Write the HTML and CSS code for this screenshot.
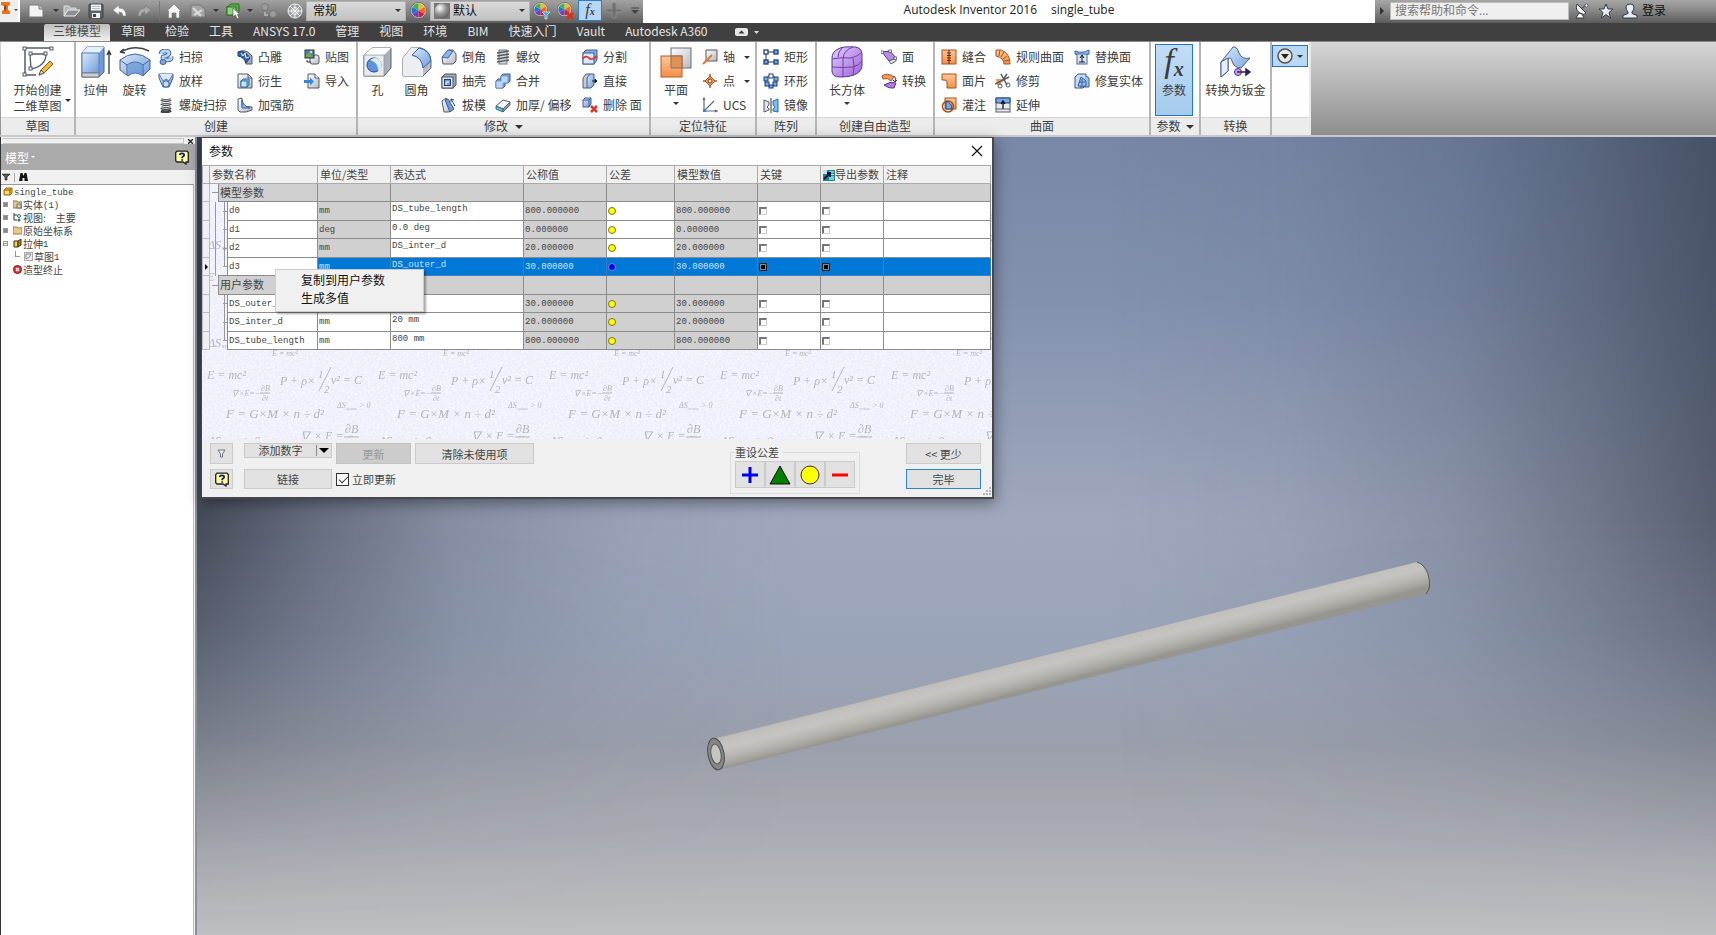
FILE: index.html
```html
<!DOCTYPE html>
<html lang="zh-CN">
<head>
<meta charset="utf-8">
<title>Autodesk Inventor 2016 single_tube</title>
<link rel="stylesheet" href="styles.css">
</head>
<body>
<svg class="defs" aria-hidden="true">
  <defs>
    <linearGradient id="b" x1="0" y1="0" x2="1" y2="1"><stop offset="0" stop-color="#dbeafb"/><stop offset="1" stop-color="#6d9bd8"/></linearGradient>
    <linearGradient id="o" x1="0" y1="0" x2="0" y2="1"><stop offset="0" stop-color="#ffc795"/><stop offset="1" stop-color="#f2904c"/></linearGradient>
    <linearGradient id="g" x1="0" y1="0" x2="1" y2="1"><stop offset="0" stop-color="#ffffff"/><stop offset="1" stop-color="#b4bac2"/></linearGradient>
    <linearGradient id="p" x1="0" y1="0" x2="1" y2="1"><stop offset="0" stop-color="#e6ccff"/><stop offset="1" stop-color="#9a63d8"/></linearGradient>
    <radialGradient id="ball" cx=".35" cy=".3" r=".8"><stop offset="0" stop-color="#fff"/><stop offset=".5" stop-color="#999"/><stop offset="1" stop-color="#555"/></radialGradient>
    <symbol id="wheel" viewBox="0 0 16 16"><circle cx="8" cy="8" r="7.500" fill="#e8e8e8" stroke="#555" stroke-width=".8"/><path d="M8 8V1.500A6.500 6.500 0 0 1 13.600 4.750Z" fill="#f7b52c"/><path d="M8 8L13.600 4.750A6.500 6.500 0 0 1 13.600 11.250Z" fill="#f06a22"/><path d="M8 8L13.600 11.250A6.500 6.500 0 0 1 8 14.500Z" fill="#d32034"/><path d="M8 8V14.500A6.500 6.500 0 0 1 2.400 11.250Z" fill="#7a3bb5"/><path d="M8 8L2.400 11.250A6.500 6.500 0 0 1 2.400 4.750Z" fill="#2770d6"/><path d="M8 8L2.400 4.750A6.500 6.500 0 0 1 8 1.500Z" fill="#42b54a"/></symbol>
    <symbol id="help" viewBox="0 0 14 14"><path d="M2 .7H12L13.300 2V11.500H11V13.500L8 11.500H2L.7 10.200V2Z" fill="#ffff9c" stroke="#222" stroke-width="1.300"/><path d="M4.800 4.600Q4.800 2.800 7 2.800T9.200 4.600Q9.200 5.700 7.200 6.700V7.700M7.200 8.700V10.200" fill="none" stroke="#1a1a8c" stroke-width="1.800"/></symbol>
  </defs>
</svg>

<header class="titlebar">
  <div class="qat">
    <button class="logo" aria-label="应用程序菜单"><svg width="18" height="14" viewBox="0 0 18 14"><path d="M1 0H10V3L8 4V8L10 9V12H2V9L4 8V4L1 3Z" fill="#e8741e"/><path d="M4 4L6 3V9L4 8Z" fill="#9c430a"/><path d="M14 7H18L16 9Z" fill="#444"/></svg></button>
    <button class="q q-wide" aria-label="新建"><svg width="18" height="16" viewBox="0 0 18 16"><path d="M2 2H12L16 6V14H2Z" fill="#f4f4f4" stroke="#777"/><path d="M12 2V6H16" fill="#ccc" stroke="#777"/></svg></button>
    <i class="tri q-tri"></i>
    <button class="q" aria-label="打开"><svg width="18" height="16" viewBox="0 0 18 16"><path d="M1 13V3H6L7 5H13V7" fill="#b5b8bc" stroke="#ddd"/><path d="M1 13L5 7H17L12 13Z" fill="#8c9095" stroke="#eee"/></svg></button>
    <button class="q" aria-label="保存"><svg width="16" height="16" viewBox="0 0 16 16"><rect x="1" y="1" width="14" height="14" rx="1" fill="#5c6269" stroke="#3d4146"/><rect x="3" y="1.500" width="10" height="6" fill="#f0f0f0"/><path d="M4 3.500H12M4 5.500H12" stroke="#bbb"/><rect x="4" y="10" width="8" height="5" fill="#eee"/><rect x="5" y="11" width="3" height="3" fill="#444"/></svg></button>
    <button class="q" aria-label="撤消"><svg width="16" height="16" viewBox="0 0 16 16"><path d="M1 7L7 2V5Q14 5 14 13L11 13Q11 9 7 9V12Z" fill="#f5f5f5" stroke="#888" stroke-width=".6"/></svg></button>
    <button class="q" aria-label="恢复"><svg width="16" height="16" viewBox="0 0 16 16"><path d="M15 7L9 2V5Q2 5 2 13L5 13Q5 9 9 9V12Z" fill="#a9a9a9" stroke="#777" stroke-width=".6"/></svg></button>
    <i class="q-sep"></i>
    <button class="q" aria-label="主视图"><svg width="16" height="16" viewBox="0 0 16 16"><path d="M8 1L15 8H13.500V15H10V10H6V15H2.500V8H1Z" fill="#f5f5f5" stroke="#777" stroke-width=".7"/></svg></button>
    <button class="q" aria-label="更新"><svg width="16" height="16" viewBox="0 0 16 16"><path d="M1 2H10L15 6V14H1Z" fill="#a5a5a5" stroke="#777"/><path d="M3 5L11 13M4 12L12 7" stroke="#ddd" stroke-width="2"/></svg></button>
    <i class="tri q-tri2"></i>
    <button class="q" aria-label="选择"><svg width="18" height="18" viewBox="0 0 18 18"><path d="M2 5L6 2H14V10L11 13H2Z" fill="#5cab48" stroke="#2d6f22"/><rect x="2" y="5" width="9" height="8" fill="#8fd477" stroke="#2d6f22"/><path d="M8 6L8 15L10.500 13L12 17L14 16L12.500 12.500H15Z" fill="#fff" stroke="#555" stroke-width=".7"/></svg></button>
    <i class="tri q-tri"></i>
    <button class="q q-mid" aria-label="关联"><svg width="16" height="16" viewBox="0 0 16 16"><circle cx="4" cy="4" r="3.500" fill="#9c9c9c" stroke="#777"/><circle cx="12" cy="11" r="3.500" fill="#9c9c9c" stroke="#777"/><path d="M4 9V12H7" stroke="#aaa" fill="none" stroke-width="2"/></svg></button>
    <button class="q q-nar" aria-label="材料"><svg width="16" height="16" viewBox="0 0 16 16"><circle cx="8" cy="8" r="7" fill="#9b9fa2" stroke="#eee"/><path d="M8 1V15M1 8H15M3 3L13 13M13 3L3 13" stroke="#f3f3f3"/><circle cx="8" cy="8" r="3.500" fill="none" stroke="#f3f3f3"/></svg></button>
    <div class="combo"><select aria-label="材料样式"><option>常规</option></select><i class="tri"></i></div>
    <button class="q" aria-label="外观"><svg width="17" height="17"><use href="#wheel"/></svg></button>
    <div class="combo"><svg width="16" height="16" viewBox="0 0 16 16"><rect width="16" height="16" fill="#777"/><circle cx="8" cy="8" r="7.500" fill="url(#ball)"/></svg><select aria-label="外观样式"><option>默认</option></select><i class="tri"></i></div>
    <button class="q" aria-label="调整"><svg width="18" height="18" viewBox="0 0 18 18"><use href="#wheel" width="15" height="15"/><path d="M9 10H17L14 13V17H12V13Z" fill="#35a5e0" stroke="#fff" stroke-width=".6"/></svg></button>
    <button class="q" aria-label="清除"><svg width="18" height="18" viewBox="0 0 18 18"><use href="#wheel" width="15" height="15"/><path d="M10 11L16 17M16 11L10 17" stroke="#d6301f" stroke-width="2.500"/></svg></button>
    <button class="q q-fx" aria-label="参数"><i>f</i><sub>x</sub></button>
    <button class="q" aria-label="添加"><svg width="18" height="18" viewBox="0 0 18 18"><path d="M7 1H11V7H17V10H11V16H7V10H1V7H7Z" fill="#6f6f6f" stroke="#8d8d8d"/></svg></button>
    <button class="q q-end" aria-label="自定义"><svg width="10" height="8" viewBox="0 0 10 8"><path d="M1 1H9" stroke="#444"/><path d="M1 3H9L5 7Z" fill="#444"/></svg></button>
  </div>
  <h1 class="apptitle"><span>Autodesk Inventor 2016</span><span>single_tube</span></h1>
  <div class="infocenter">
    <svg width="6" height="8" viewBox="0 0 6 8"><path d="M1 0L5 4L1 8Z" fill="#333"/></svg>
    <input type="text" aria-label="搜索" placeholder="搜索帮助和命令...">
    <button aria-label="通信中心"><svg width="16" height="16" viewBox="0 0 16 16"><path d="M3 1Q0 9 10 11.500L12 10Z" fill="#f3f5f8" stroke="#343b48"/><path d="M7 6L12 2M2 15L5 10L8 11L10 15Z" fill="#fff" stroke="#343b48"/><circle cx="12.500" cy="2.500" r="1.500" fill="#fff" stroke="#343b48" stroke-width=".7"/></svg></button>
    <button aria-label="收藏夹"><svg width="16" height="16" viewBox="0 0 16 16"><path d="M8 1L10 6H15L11 9.500L12.500 15L8 11.500L3.500 15L5 9.500L1 6H6Z" fill="#e9edf3" stroke="#343b48"/></svg></button>
    <button class="login"><svg width="16" height="16" viewBox="0 0 16 16"><path d="M1 15V12.500L6 10.500V9Q4 7 4 4Q4 1 8 1T12 4Q12 7 10 9V10.500L15 12.500V15Z" fill="#e9edf3" stroke="#343b48"/></svg>登录</button>
  </div>
</header>

<nav class="tabs">
  <button class="tab tab-on">三维模型</button><button class="tab">草图</button><button class="tab">检验</button><button class="tab">工具</button><button class="tab">ANSYS 17.0</button><button class="tab">管理</button><button class="tab">视图</button><button class="tab">环境</button><button class="tab">BIM</button><button class="tab">快速入门</button><button class="tab">Vault</button><button class="tab">Autodesk A360</button>
  <button class="tab-min" aria-label="最小化功能区"><svg width="24" height="8" viewBox="0 0 24 8"><rect width="13" height="8" rx="2" fill="#e6e6e6"/><path d="M3.500 5.500H9.500L6.500 2.500Z" fill="#333"/><path d="M19 3H24L21.500 6Z" fill="#ddd"/></svg></button>
</nav>

<section class="ribbon">
  <div class="panel p-sketch">
    <div class="tools">
      <button class="big"><svg width="32" height="32" viewBox="0 0 32 32"><path d="M3 2V29M1 2H30M3 29H14" stroke="#555b66" stroke-width="1.500" fill="none"/><path d="M8 8H24Q24 20 9 23Z" fill="none" stroke="#555b66" stroke-width="1.300"/><g fill="#fff" stroke="#555b66"><rect x="1" y="1" width="3" height="3"/><rect x="28" y="1" width="3" height="3"/><rect x="1" y="27" width="3" height="3"/><rect x="7" y="6" width="3" height="3"/><rect x="22" y="6" width="3" height="3"/><rect x="7" y="21" width="3" height="3"/></g><path d="M17 29L19 24L28 15L31 18L22 27Z" fill="#f7b73d" stroke="#8a5a14"/><path d="M17 29L19 24L22 27Z" fill="#f5dfb8" stroke="#555"/></svg><span class="two-line"><span>开始创建<br>二维草图</span><i class="tri"></i></span></button>
    </div>
    <h2>草图</h2>
  </div>

  <div class="panel p-create">
    <div class="tools">
      <button class="big"><svg width="32" height="32" viewBox="0 0 32 32"><path d="M2 7L7 1H24V26L19 31H2Z" fill="#6f9ddb" stroke="#4a618c"/><path d="M2 7L7 1H24L19 7Z" fill="#e5f0fd"/><rect x="2" y="7" width="17" height="20" fill="url(#b)" stroke="#5b7fb8"/><path d="M2 27H19V31H2Z" fill="#cdd0d4" stroke="#777"/><path d="M29 28V6M27 9L29 5L31 9" stroke="#333" fill="none" stroke-width="1.300"/></svg><span>拉伸</span></button>
      <button class="big"><svg width="32" height="32" viewBox="0 0 32 32"><path d="M2 6Q16 -2 30 5M1 6L5 3M1 6L6 7" stroke="#3d4149" fill="none" stroke-width="1.500"/><path d="M1 14Q16 2 31 14V23L24 30Q16 24 9 30L1 24Z" fill="url(#b)" stroke="#4a618c"/><path d="M1 14L8 19Q16 13 24 19L31 14M8 19V29M24 19V30" fill="none" stroke="#4a618c"/><path d="M8 19Q16 13 24 19V30Q16 24 9 30Z" fill="#6393d5" opacity=".6"/></svg><span>旋转</span></button>
      <div class="col c-1">
        <button class="sm"><svg viewBox="0 0 16 16"><path d="M3 5Q3 2 7 2T11 4T8 7L5 8Q4 11 9 11Q14 11 13 8" fill="none" stroke="#3c5f9c" stroke-width="4.500"/><path d="M3 5Q3 2 7 2T11 4T8 7L5 8Q4 11 9 11Q14 11 13 8" fill="none" stroke="#b8d4f5" stroke-width="2.800"/><ellipse cx="5" cy="13" rx="3" ry="2.500" fill="#7da9e2" stroke="#3c5f9c"/></svg>扫掠</button>
        <button class="sm"><svg viewBox="0 0 16 16"><path d="M1 1H15V5L11 14H5L1 5Z" fill="url(#b)" stroke="#3c5f9c"/><path d="M1 1L5 8L8 6L11 8L15 1" fill="#dce9fa" stroke="#3c5f9c" stroke-width=".8"/><circle cx="8" cy="11" r="3.200" fill="#c2dbf7" stroke="#3c5f9c"/></svg>放样</button>
        <button class="sm"><svg viewBox="0 0 16 16"><g fill="none" stroke="#3f444c" stroke-width="3"><path d="M3 2.500Q8 5 13 2.500M3 6.500Q8 9 13 6.500M3 10.500Q8 13 13 10.500M3 14Q8 16 13 13.500"/></g><g fill="none" stroke="#c6cad0" stroke-width="1"><path d="M3 2.500Q8 5 13 2.500M3 6.500Q8 9 13 6.500M3 10.500Q8 13 13 10.500"/></g></svg>螺旋扫掠</button>
      </div>
      <div class="col c-2">
        <button class="sm"><svg viewBox="0 0 16 16"><path d="M1 3Q9 -1 15 7V15L9 15L8 10Z" fill="#aab0b8" stroke="#555"/><path d="M1 3Q8 1 13 9L9 14Q7 8 1 7Z" fill="#2f64b0" stroke="#1c3c77"/><path d="M4 4L6 7L8 4L9 9L12 8" fill="none" stroke="#fff"/></svg>凸雕</button>
        <button class="sm"><svg viewBox="0 0 16 16"><path d="M1 1H11L15 5V15H1Z" fill="url(#g)" stroke="#555b66"/><path d="M11 1V5H15" fill="none" stroke="#555b66"/><path d="M4 8L6 6H12V12L10 14H4Z" fill="#7fb9e6" stroke="#316e9f"/><rect x="4" y="8" width="6" height="6" fill="#cce6fa" stroke="#316e9f"/></svg>衍生</button>
        <button class="sm"><svg viewBox="0 0 16 16"><path d="M1 2L5 1V9L15 10V13L9 15H3L1 13Z" fill="url(#g)" stroke="#555b66"/><path d="M5 3Q6 9 13 11L5 11Z" fill="#8cb9ee" stroke="#2d5fa8"/></svg>加强筋</button>
      </div>
      <div class="col c-3">
        <button class="sm"><svg viewBox="0 0 16 16"><rect x="6" y="6" width="9" height="9" rx="2" fill="url(#g)" stroke="#555b66"/><rect x="1" y="1" width="9" height="8" fill="#4c82b8" stroke="#333"/><path d="M2 6L5 4L9 8H2Z" fill="#72ad3e"/><circle cx="7" cy="3" r="1.200" fill="#fdeb55"/><path d="M3 11V13H7" fill="none" stroke="#333"/></svg>贴图</button>
        <button class="sm"><svg viewBox="0 0 16 16"><path d="M4 1H11L15 5V15H4Z" fill="url(#g)" stroke="#555b66"/><path d="M11 1V5H15" fill="#fff" stroke="#555b66"/><path d="M0 7H6V4.500L10 8.500L6 12.500V10H0Z" fill="#3389d6"/></svg>导入</button>
      </div>
    </div>
    <h2>创建</h2>
  </div>

  <div class="panel p-modify">
    <div class="tools">
      <button class="big"><svg width="32" height="32" viewBox="0 0 32 32"><path d="M2 9L10 2H29V22L22 30H2Z" fill="#a9afb8" stroke="#5b616c"/><path d="M2 9L10 2H29L22 9Z" fill="#fff"/><path d="M2 9H22V30H2Z" fill="#e9ebef" stroke="#8a9099" stroke-width=".7"/><circle cx="12" cy="19" r="7" fill="#5f92dd" stroke="#27487f"/><path d="M12 12A7 7 0 0 1 16 25Q17 17 8 14Z" fill="#dcebfd"/></svg><span>孔</span></button>
      <button class="big"><svg width="32" height="32" viewBox="0 0 32 32"><path d="M2 12L10 2H20Q30 5 30 16V22L22 30H2Z" fill="#b9bec6" stroke="#5b616c"/><path d="M2 12L10 2H18L11 10Q22 13 22 22V30H2Z" fill="#eceef1"/><path d="M11 9L18 2Q29 4 30 15L22 22Q21 11 11 9Z" fill="url(#b)" stroke="#3664a8"/></svg><span>圆角</span></button>
      <div class="col c-4">
        <button class="sm"><svg viewBox="0 0 16 16"><path d="M1 8L8 1H12L15 5V12L12 15H2Z" fill="url(#g)" stroke="#555b66"/><path d="M1 8L7 1L12 2L7 9Z" fill="#8db7ee" stroke="#3664a8"/></svg>倒角</button>
        <button class="sm"><svg viewBox="0 0 16 16"><path d="M1 4L4 1H15V12L12 15H1Z" fill="#a3a9b2" stroke="#4d535d"/><rect x="1" y="4" width="11" height="11" fill="#dde7f4" stroke="#4d535d"/><rect x="3.500" y="6.500" width="6" height="6" fill="#6f9ddd" stroke="#203f78"/><path d="M5 12V9H8" stroke="#fff" fill="none"/></svg>抽壳</button>
        <button class="sm"><svg viewBox="0 0 16 16"><path d="M1 4L5 1L12 12L8 15H3Z" fill="url(#g)" stroke="#555b66"/><path d="M4 3L7 2L13 12L9 15Z" fill="#6f9ddd" stroke="#305a9b"/><path d="M10 2L14 9M10 2V5M10 2L13 3" stroke="#444" fill="none"/></svg>拔模</button>
      </div>
      <div class="col c-5">
        <button class="sm"><svg viewBox="0 0 16 16"><rect x="4" y="1" width="8" height="14" fill="#d6d9dd" stroke="#777"/><path d="M2 4L14 2M2 7L14 5M2 10L14 8M2 13L14 11" stroke="#555b66" stroke-width="1.300"/></svg>螺纹</button>
        <button class="sm"><svg viewBox="0 0 16 16"><path d="M6 3L8 1H15V8L13 10H10V13L8 15H1V8L3 6H6Z" fill="#7fa8de" stroke="#365b96"/><path d="M6 3H13V10H8V15H1V8H6Z" fill="#bcd5f4" stroke="#5b84bf" stroke-width=".7"/></svg>合并</button>
        <button class="sm"><svg viewBox="0 0 16 16"><path d="M1 9L8 3L15 5L8 12Z" fill="#f4f6f8" stroke="#555b66"/><path d="M1 9V12L8 15V12Z" fill="#74b6dd" stroke="#316e9f"/><path d="M8 12L15 5V8L8 15Z" fill="#9aa0a9" stroke="#555b66"/></svg>加厚/ 偏移</button>
      </div>
      <div class="col c-6">
        <button class="sm"><svg viewBox="0 0 16 16"><path d="M1 4L4 1H15V11L12 15H1Z" fill="#86aee0" stroke="#3c5f9c"/><rect x="1" y="4" width="11" height="11" fill="#d9e7f8" stroke="#3c5f9c"/><path d="M0 10Q4 6 7 9T15 7" fill="none" stroke="#d63b3b" stroke-width="1.800"/></svg>分割</button>
        <button class="sm"><svg viewBox="0 0 16 16"><path d="M1 5L4 1H8V11L5 15H1Z" fill="#c9ccd2" stroke="#555b66"/><path d="M5 5L8 1H12V12L9 15H5Z" fill="url(#b)" stroke="#3c5f9c"/><path d="M10 8H13M13 6L15 8L13 10Z" stroke="#222" fill="#222"/></svg>直接</button>
        <button class="sm"><svg viewBox="0 0 16 16"><path d="M1 3L3 1H9V7L7 10H1Z" fill="url(#b)" stroke="#3c5f9c"/><path d="M1 3H7V10M7 3L9 1" fill="none" stroke="#3c5f9c"/><path d="M9 9L15 15M15 9L9 15" stroke="#d8382c" stroke-width="2.600"/></svg>删除 面</button>
      </div>
    </div>
    <h2>修改<i class="tri"></i></h2>
  </div>

  <div class="panel p-locate">
    <div class="tools">
      <button class="big"><svg width="32" height="32" viewBox="0 0 32 32"><rect x="11" y="2" width="20" height="20" fill="url(#g)" stroke="#666d78"/><rect x="1" y="10" width="21" height="21" fill="url(#o)" stroke="#b85a1c"/><path d="M11 10H22V22H11Z" fill="#e09058" stroke="#8d6c58"/></svg><span>平面</span><i class="tri"></i></button>
      <div class="col c-7">
        <button class="sm"><svg viewBox="0 0 16 16"><path d="M4 1H15V12H4Z" fill="url(#g)" stroke="#555b66"/><path d="M1 15L10 6" stroke="#e1762c" stroke-width="2"/></svg>轴<i class="tri"></i></button>
        <button class="sm"><svg viewBox="0 0 16 16"><path d="M8 1V15M1 8H15" stroke="#b0561f" stroke-width="1.500"/><path d="M8 3L13 8L8 13L3 8Z" fill="#f59a5a" stroke="#b0561f"/><circle cx="8" cy="8" r="2" fill="#ffe3c6" stroke="#7d3d13"/></svg>点<i class="tri"></i></button>
        <button class="sm"><svg viewBox="0 0 16 16"><path d="M2 1V14H15M2 14L12 4M1 3L2 1L3 3M13 13L15 14L13 15" stroke="#666d78" fill="none" stroke-width="1.200"/><rect x="1" y="12" width="3" height="3" fill="#3389d6"/></svg>UCS</button>
      </div>
    </div>
    <h2>定位特征</h2>
  </div>

  <div class="panel p-array">
    <div class="tools">
      <div class="col">
        <button class="sm"><svg viewBox="0 0 16 16"><path d="M5 3H11M3 5V11M5 13H11" stroke="#333"/><g fill="#7ba9e8" stroke="#1d4284" stroke-width="1.300"><rect x="1" y="1" width="4" height="4" fill="#fff"/><rect x="11" y="1" width="4" height="4"/><rect x="1" y="11" width="4" height="4"/><rect x="11" y="11" width="4" height="4"/></g></svg>矩形</button>
        <button class="sm"><svg viewBox="0 0 16 16"><circle cx="8" cy="8" r="5.500" fill="none" stroke="#555"/><g fill="#7ba9e8" stroke="#1d4284"><rect x="6" y="1" width="4" height="4" fill="#fff"/><rect x="11" y="4" width="4" height="4"/><rect x="10" y="9" width="4" height="4"/><rect x="6" y="12" width="4" height="3"/><rect x="2" y="9" width="4" height="4"/><rect x="1" y="4" width="4" height="4"/></g></svg>环形</button>
        <button class="sm"><svg viewBox="0 0 16 16"><path d="M1 3L6 5V8L4 10L6 12V13L1 15Z" fill="#dfe3e8" stroke="#555b66"/><path d="M15 2L10 4V8L12 10L10 12V14L15 15Z" fill="#7cbcf0" stroke="#2b6da8"/><path d="M8 1V16" stroke="#333"/></svg>镜像</button>
      </div>
    </div>
    <h2>阵列</h2>
  </div>

  <div class="panel p-free">
    <div class="tools">
      <button class="big"><svg width="32" height="32" viewBox="0 0 32 32"><path d="M1 12Q1 6 7 3Q12 0 24 1Q31 2 31 8V19Q31 25 25 28Q20 31 9 31Q1 31 1 25Z" fill="url(#p)" stroke="#5a348c"/><path d="M1 13Q10 11 20 12Q28 10 31 6M11 2Q7 6 7 11M22 1Q13 4 12 12V31M1 21Q12 22 22 21Q29 19 31 15M22 12Q24 20 22 30" fill="none" stroke="#6d42a5"/></svg><span>长方体</span><i class="tri"></i></button>
      <div class="col">
        <button class="sm"><svg viewBox="0 0 16 16"><path d="M1 3L9 2L15 9L8 12Z" fill="#b98be8" stroke="#5a348c"/><path d="M8 12L15 9V12L10 15Z" fill="#d9dbe0" stroke="#666"/><g fill="#fff" stroke="#444" stroke-width=".7"><rect x="0" y="2" width="2.500" height="2.500"/><rect x="8" y="1" width="2.500" height="2.500"/><rect x="13" y="8" width="2.500" height="2.500"/></g></svg>面</button>
        <button class="sm"><svg viewBox="0 0 16 16"><path d="M1 3Q6 -1 13 4L10 8Q7 4 2 6Z" fill="#f5965a" stroke="#a9531d"/><path d="M3 12Q9 8 15 10L13 15Q8 16 3 12Z" fill="#b07de0" stroke="#5a348c"/><path d="M13 3Q16 5 14 9M12 7L14 9L16 7" fill="none" stroke="#333"/></svg>转换</button>
      </div>
    </div>
    <h2>创建自由造型</h2>
  </div>

  <div class="panel p-surface">
    <div class="tools">
      <div class="col c-8">
        <button class="sm"><svg viewBox="0 0 16 16"><rect x="1" y="1" width="14" height="14" fill="url(#o)" stroke="#a9531d"/><path d="M8 1V15M6 4H10M6 6.500H10M6 9H10M6 11.500H10" stroke="#5c2c0d"/></svg>缝合</button>
        <button class="sm"><svg viewBox="0 0 16 16"><path d="M1 1H15V15H6V9Q6 7 3 7H1Z" fill="url(#o)" stroke="#a9531d"/></svg>面片</button>
        <button class="sm"><svg viewBox="0 0 16 16"><rect x="4" y="1" width="11" height="11" fill="url(#o)" stroke="#a9531d"/><circle cx="7" cy="9.500" r="5.500" fill="none" stroke="#a9531d" stroke-width="1.500"/><path d="M5 4Q11 6 11 12L5 12Z" fill="#7aa9e6" stroke="#1d4284"/></svg>灌注</button>
      </div>
      <div class="col c-9">
        <button class="sm"><svg viewBox="0 0 16 16"><path d="M1 1H6Q15 4 15 15H9Q9 9 1 7Z" fill="url(#o)" stroke="#a9531d"/><path d="M5 1L4 7M9 3L6 8M12 7L8 10M15 11L9 12" stroke="#a9531d"/></svg>规则曲面</button>
        <button class="sm"><svg viewBox="0 0 16 16"><path d="M1 6L7 6L6 12L2 12Z" fill="#f5965a"/><path d="M0 11L14 4M6 1L12 12M12 1L7 8" stroke="#555b66" stroke-width="1.500"/><circle cx="13" cy="12" r="2" fill="none" stroke="#555b66"/><circle cx="5" cy="13" r="2" fill="none" stroke="#555b66"/></svg>修剪</button>
        <button class="sm"><svg viewBox="0 0 16 16"><rect x="1" y="1" width="14" height="14" fill="#e8eaed" stroke="#555b66"/><path d="M1 1H15V6H1Z" fill="#7aa9e6" stroke="#1d4284"/><path d="M8 12V5M6 7L8 4L10 7" stroke="#111" fill="none" stroke-width="1.300"/><path d="M1 12H15" stroke="#555b66"/></svg>延伸</button>
      </div>
      <div class="col">
        <button class="sm"><svg viewBox="0 0 16 16"><path d="M1 2Q8 5 15 1V5Q8 8 1 5Z" fill="#9cc4f5" stroke="#2d5fa8"/><rect x="3" y="5" width="10" height="10" fill="#dce6f2" stroke="#44679b"/><path d="M8 13V7M6 9L8 6L10 9M5 13H11" stroke="#111" fill="none"/></svg>替换面</button>
        <button class="sm"><svg viewBox="0 0 16 16"><path d="M1 4L4 1H12V12L9 15H1Z" fill="#c7dbf3" stroke="#305a9b"/><path d="M7 4L12 8V13H4L7 4ZM12 3L15 5V14H6" fill="#9fc1ec" stroke="#305a9b"/><path d="M5 9H11M8 6V12" stroke="#305a9b"/></svg>修复实体</button>
      </div>
    </div>
    <h2>曲面</h2>
  </div>

  <div class="panel p-param">
    <div class="tools">
      <button class="big big-on"><span class="fx"><i>f</i><sub>x</sub></span><span>参数</span></button>
    </div>
    <h2>参数<i class="tri"></i></h2>
  </div>

  <div class="panel p-convert">
    <div class="tools">
      <button class="big"><svg width="32" height="32" viewBox="0 0 32 32"><path d="M1 16L13 1Q17 0 19 7Q22 14 30 12L21 22Q14 22 12 15Q10 9 8 14V25L1 31Z" fill="url(#b)" stroke="#4a618c"/><path d="M1 16L8 12V25L1 31Z" fill="#e6eef8" stroke="#4a618c"/><circle cx="18" cy="26" r="3.500" fill="#c8a4ef" stroke="#4b2a7d"/><path d="M17 26H29M26 23L30 26L26 29Z" stroke="#332050" fill="#332050" stroke-width="1.500"/></svg><span>转换为钣金</span></button>
    </div>
    <h2>转换</h2>
  </div>

  <div class="panel p-more">
    <div class="tools">
      <button class="more" aria-label="更多"><svg width="16" height="16" viewBox="0 0 16 16"><circle cx="8" cy="8" r="7" fill="#e8e8e8" stroke="#555" stroke-width="1.500"/><path d="M4 6H12L8 11Z" fill="#222"/></svg><i class="tri"></i></button>
    </div>
    <h2></h2>
  </div>
</section>

<main class="work">
  <aside class="browser">
    <div class="grip"><button aria-label="关闭浏览器"><svg width="5" height="5" viewBox="0 0 5 5"><path d="M0 0L5 5M5 0L0 5" stroke="#222" stroke-width="1.300"/></svg></button></div>
    <div class="bhead"><button class="bname">模型<i class="tri"></i></button><button aria-label="帮助"><svg width="14" height="15"><use href="#help"/></svg></button></div>
    <div class="btools">
      <button aria-label="过滤"><svg width="8" height="8" viewBox="0 0 8 8"><path d="M0 1H8L5 4V7H3V4Z" fill="#555" stroke="#222" stroke-width=".6"/></svg></button>
      <i></i>
      <button aria-label="查找"><svg width="9" height="8" viewBox="0 0 9 8"><path d="M1.500 0H3.500L4.500 3L5.500 0H7.500L9 8H5.500V5H3.500V8H0Z" fill="#111"/></svg></button>
    </div>
    <ul class="tree">
      <li class="root"><svg width="10" height="9" viewBox="0 0 10 9"><path d="M1 3L3 1H9V6L7 8H1Z" fill="#f5bd2c" stroke="#9a6206"/><path d="M1 3H7V8M7 3L9 1" fill="none" stroke="#9a6206"/><rect x="2" y="4" width="4" height="3" fill="#ffe27a"/></svg><b>single_tube</b></li>
      <li><i class="node plus"></i><svg width="9" height="9" viewBox="0 0 9 9"><path d="M0 1H4L5 2H9V8H0Z" fill="#e6c88d" stroke="#8b7446"/><rect x="4" y="4" width="4" height="4" fill="#ccc" stroke="#555" stroke-width=".7"/></svg>实体<b>(1)</b></li>
      <li><i class="node plus"></i><svg width="9" height="9" viewBox="0 0 9 9"><path d="M1 0V7H4M1 2H4" stroke="#333" fill="none"/><circle cx="6" cy="3" r="1.500" fill="none" stroke="#2b6c8c"/><circle cx="6" cy="7" r="1.500" fill="#2b6c8c"/></svg>视图:<span class="main-view">主要</span></li>
      <li><i class="node plus"></i><svg width="9" height="9" viewBox="0 0 9 9"><path d="M0 1H4L5 2H9V8H0Z" fill="#ecc88a" stroke="#9b7b45"/></svg>原始坐标系</li>
      <li><i class="node"></i><svg width="9" height="9" viewBox="0 0 9 9"><path d="M1 2H5V8H1Z" fill="#f5d132" stroke="#333"/><path d="M5 2L8 0V6L5 8Z" fill="#c47b12" stroke="#333"/></svg>拉伸<b>1</b></li>
      <li class="deep"><i class="elbow"></i><svg width="9" height="9" viewBox="0 0 9 9"><rect x=".5" y=".5" width="8" height="8" fill="#eee" stroke="#aaa"/><path d="M2 7V2H7Q6 6 2 7" fill="none" stroke="#888"/></svg>草图<b>1</b></li>
      <li class="last"><svg width="9" height="9" viewBox="0 0 9 9"><circle cx="4.500" cy="4.500" r="4" fill="#e33131" stroke="#8c1111"/><path d="M3 3L6 6M6 3L3 6" stroke="#fff" stroke-width="1.200"/></svg>造型终止</li>
    </ul>
  </aside>

  <div class="view">
    <svg class="model" aria-label="single_tube">
      <defs><linearGradient id="tube" gradientUnits="userSpaceOnUse" x1="850" y1="515" x2="858" y2="546"><stop offset="0" stop-color="#b9b8b4"/><stop offset=".15" stop-color="#c1c0bc"/><stop offset=".4" stop-color="#c5c4c0"/><stop offset=".65" stop-color="#b8b7b2"/><stop offset=".9" stop-color="#a3a29c"/><stop offset="1" stop-color="#96958f"/></linearGradient></defs>
      <path d="M516 602L1220 425Q1227 427 1231 437Q1235 451 1229 457L522 633Z" fill="url(#tube)"/>
      <path d="M1220 425Q1227 427 1231 437Q1235 451 1229 457" fill="none" stroke="#55585a"/>
      <ellipse cx="519" cy="617" rx="8" ry="16" transform="rotate(-10 519 617)" fill="#868682" stroke="#4c4e50"/>
      <ellipse cx="519" cy="617" rx="5" ry="10" transform="rotate(-10 519 617)" fill="#c6c5c0" stroke="#55585a"/>
    </svg>
  </div>

  <section class="dialog" role="dialog" aria-label="参数">
    <div class="dtitle"><h2>参数</h2><button aria-label="关闭"><svg width="12" height="12" viewBox="0 0 12 12"><path d="M1 1L11 11M11 1L1 11" stroke="#111" stroke-width="1.200"/></svg></button></div>
    <div class="sheet">
      <svg class="paper" aria-hidden="true">
        <defs>
          <filter id="grain" x="0" y="0" width="100%" height="100%"><feTurbulence type="fractalNoise" baseFrequency=".45" numOctaves="2" seed="4"/><feColorMatrix values="0 0 0 0 .8  0 0 0 0 .8  0 0 0 0 .96  1.600 0 0 0 -.42"/></filter>
          <pattern id="formula" patternUnits="userSpaceOnUse" x="5" y="184" width="171" height="98">
            <g class="ink">
              <text x="65" y="7" font-size="8">E = mc²</text>
              <text x="0" y="30" font-size="12">E = mc²</text>
              <text x="73" y="36" font-size="12">P + ρ×</text><text x="111" y="29" font-size="11">1</text><path d="M112 42L124 18"/><text x="117" y="44" font-size="11">2</text><text x="124" y="35" font-size="12">v² = C</text>
              <text x="24" y="47" font-size="8">∇×E=−</text><text x="54" y="42" font-size="8">∂B</text><path d="M53 44H63"/><text x="55" y="52" font-size="8">∂t</text>
              <text x="130" y="59" font-size="8">ΔS</text><text x="139" y="61" font-size="4">system</text><text x="152" y="59" font-size="8">&gt; 0</text>
              <text x="19" y="69" font-size="13">F = G×M × n ÷ d²</text>
              <text x="92" y="91" font-size="12">∇ × E = −</text><text x="138" y="84" font-size="12">∂B</text><path d="M137 88H152"/>
              <text x="1" y="96" font-size="12">ΔS</text><text x="15" y="97" font-size="6">system</text><text x="36" y="96" font-size="12">&gt; 0</text>
            </g>
          </pattern>
        </defs>
        <rect width="100%" height="100%" fill="#f7f7fe"/>
        <rect width="100%" height="100%" filter="url(#grain)"/>
        <rect width="100%" height="100%" fill="url(#formula)"/>
      </svg>
      <table>
        <colgroup><col class="w-mark"><col class="w-pad"><col class="w-pad"><col class="w-name"><col class="w-unit"><col class="w-expr"><col class="w-nom"><col class="w-tol"><col class="w-model"><col class="w-key"><col class="w-key"><col></colgroup>
        <thead><tr><th class="mark"></th><th colspan="3">参数名称</th><th>单位/类型</th><th>表达式</th><th>公称值</th><th>公差</th><th>模型数值</th><th>关键</th><th class="exp"><svg width="12" height="11" viewBox="0 0 12 11"><rect width="12" height="11" fill="#158a8a"/><path d="M6 2H11M6 4.500H11M6 7H11M6 9H11" stroke="#fff"/><path d="M1 9L6 4M3 3H7V7" stroke="#0a0a50" stroke-width="1.800" fill="none"/><path d="M0 0H4V4H0Z" fill="#bfe3e3"/></svg>导出参数</th><th>注释</th></tr></thead>
        <tbody>
          <tr class="group"><td class="mark"></td><td class="pad minus"></td><td class="gname" colspan="2">模型参数</td><td></td><td></td><td></td><td></td><td></td><td></td><td></td><td></td></tr>
          <tr><td class="mark"></td><td class="pad line"></td><td class="pad branch"></td><td>d0</td><td class="ro">mm</td><td class="ex">DS_tube_length</td><td class="ro">800.000000</td><td><i class="dot"></i></td><td class="ro">800.000000</td><td><input type="checkbox" aria-label="d0 关键"></td><td><input type="checkbox" aria-label="d0 导出"></td><td></td></tr>
          <tr><td class="mark"></td><td class="pad line"></td><td class="pad branch"></td><td>d1</td><td class="ro">deg</td><td class="ex">0.0 deg</td><td class="ro">0.000000</td><td><i class="dot"></i></td><td class="ro">0.000000</td><td><input type="checkbox" aria-label="d1 关键"></td><td><input type="checkbox" aria-label="d1 导出"></td><td></td></tr>
          <tr><td class="mark"></td><td class="pad line"></td><td class="pad branch"></td><td>d2</td><td class="ro">mm</td><td class="ex">DS_inter_d</td><td class="ro">20.000000</td><td><i class="dot"></i></td><td class="ro">20.000000</td><td><input type="checkbox" aria-label="d2 关键"></td><td><input type="checkbox" aria-label="d2 导出"></td><td></td></tr>
          <tr class="sel"><td class="mark"><i class="cur"></i></td><td class="pad line"></td><td class="pad branch end"></td><td class="nm">d3</td><td>mm</td><td class="ex">DS_outer_d</td><td>30.000000</td><td><i class="dot"></i></td><td>30.000000</td><td><input type="checkbox" aria-label="d3 关键"></td><td><input type="checkbox" aria-label="d3 导出"></td><td></td></tr>
          <tr class="group"><td class="mark"></td><td class="pad minus"></td><td class="gname" colspan="2">用户参数</td><td></td><td></td><td></td><td></td><td></td><td></td><td></td><td></td></tr>
          <tr><td class="mark"></td><td class="pad"></td><td class="pad branch"></td><td>DS_outer_d</td><td></td><td class="ex"></td><td class="ro">30.000000</td><td class="ro"><i class="dot"></i></td><td class="ro">30.000000</td><td><input type="checkbox" aria-label="DS_outer_d 关键"></td><td><input type="checkbox" aria-label="DS_outer_d 导出"></td><td></td></tr>
          <tr><td class="mark"></td><td class="pad"></td><td class="pad branch"></td><td>DS_inter_d</td><td>mm</td><td class="ex">20 mm</td><td class="ro">20.000000</td><td class="ro"><i class="dot"></i></td><td class="ro">20.000000</td><td><input type="checkbox" aria-label="DS_inter_d 关键"></td><td><input type="checkbox" aria-label="DS_inter_d 导出"></td><td></td></tr>
          <tr><td class="mark"></td><td class="pad"></td><td class="pad branch end"></td><td>DS_tube_length</td><td>mm</td><td class="ex">800 mm</td><td class="ro">800.000000</td><td class="ro"><i class="dot"></i></td><td class="ro">800.000000</td><td><input type="checkbox" aria-label="DS_tube_length 关键"></td><td><input type="checkbox" aria-label="DS_tube_length 导出"></td><td></td></tr>
        </tbody>
      </table>
    </div>
    <div class="foot">
      <div class="fleft">
        <button class="btn" aria-label="过滤器"><svg width="9" height="9" viewBox="0 0 9 9"><path d="M1 1H8L5.500 5V8H3.500V5Z" fill="#e8eef4" stroke="#6b7480"/></svg></button>
        <button class="btn split"><span>添加数字</span><i class="bar"></i><i class="tri"></i></button>
        <button class="btn" disabled>更新</button>
        <button class="btn">清除未使用项</button>
        <button class="btn" aria-label="帮助"><svg width="14" height="15"><use href="#help"/></svg></button>
        <button class="btn">链接</button>
        <label class="now"><input type="checkbox" checked>立即更新</label>
      </div>
      <fieldset class="reset">
        <legend>重设公差</legend>
        <div>
          <button class="btn" aria-label="上偏差"><svg width="16" height="16" viewBox="0 0 16 16"><path d="M8 0V16M0 8H16" stroke="#0000fa" stroke-width="3"/></svg></button>
          <button class="btn" aria-label="中间值"><svg width="22" height="20" viewBox="0 0 22 20"><path d="M11 1L21 19H1Z" fill="#008000" stroke="#111"/></svg></button>
          <button class="btn" aria-label="公称值"><svg width="20" height="20" viewBox="0 0 20 20"><circle cx="10" cy="10" r="9" fill="#ff0" stroke="#333"/></svg></button>
          <button class="btn" aria-label="下偏差"><svg width="16" height="4" viewBox="0 0 16 4"><path d="M0 2H16" stroke="#f00" stroke-width="3"/></svg></button>
        </div>
      </fieldset>
      <div class="fright"><button class="btn">&lt;&lt; 更少</button><button class="btn primary">完毕</button></div>
    </div>
    <svg class="resize" width="9" height="9" viewBox="0 0 9 9"><path d="M7 0H9V2H7ZM4 3H6V5H4ZM7 3H9V5H7ZM1 6H3V8H1ZM4 6H6V8H4ZM7 6H9V8H7Z" fill="#b5b5b5"/></svg>
    <div class="menu" role="menu"><button role="menuitem">复制到用户参数</button><button role="menuitem">生成多值</button></div>
  </section>
</main>
</body>
</html>
```
FILE: styles.css
```css
* { box-sizing: border-box; }
html, body { height: 100%; }
body {
  margin: 0;
  display: flex;
  flex-direction: column;
  overflow: hidden;
  font: 12px/16px "Open Sans", "Noto Sans CJK SC", sans-serif;
  color: #3c3c3c;
  background: #fff;
}
button { font: inherit; color: inherit; background: none; border: 0; padding: 0; margin: 0; white-space: nowrap; }
h1, h2 { margin: 0; font-size: 12px; font-weight: 400; }
svg { display: block; flex: none; }
.defs { position: absolute; width: 0; height: 0; }
.tri { display: inline-block; flex: none; width: 0; height: 0; border: 3px solid transparent; border-top: 3px solid #333; border-bottom: 0; }

/* title bar */
.titlebar { display: flex; height: 23px; flex: none; background: #fff; }
.qat { display: flex; align-items: center; height: 23px; padding-bottom: 2px; background: linear-gradient(#a2a2a2, #8a8a8a 40%, #5e5e5e); flex: none; }
.logo { width: 20px; height: 23px; background: #eee; border-right: 2px solid #fff; }
.logo svg { margin-bottom: 4px; }
.q { width: 24px; height: 21px; display: flex; align-items: center; justify-content: center; }
.q-wide { width: 32px; }
.q-mid { width: 30px; }
.q-nar { width: 22px; }
.q-end { width: 17px; }
.q-tri { margin: 0 1px; }
.q-tri2 { margin: 0 3px; }
.q-sep { width: 1px; height: 20px; margin: 0 2px 0 3px; background: #777; }
.q-fx { background: #b7d6f3; border: 1px solid #2a7fd2; align-items: baseline; font-family: "Liberation Serif", serif; font-size: 16px; line-height: 18px; color: #2e3a4a; }
.q-fx sub { font-size: 10px; font-style: italic; font-weight: 700; }
.combo { display: flex; align-items: center; width: 100px; height: 20px; padding: 0 4px 0 3px; background: linear-gradient(#d9d9d9, #c2c2c2); border: 1px solid #b2b2b2; }
.combo select { flex: 1; min-width: 0; appearance: none; border: 0; background: none; font: inherit; color: #111; padding: 0 3px; }
.apptitle { flex: 1; display: flex; justify-content: center; align-items: flex-start; gap: 14px; line-height: 20px; color: #222; }
.infocenter { display: flex; align-items: center; gap: 8px; width: 341px; padding: 0 0 2px 4px; background: linear-gradient(#a6a6a6, #8c8c8c 40%, #5c5c5c); color: #111; }
.infocenter input { width: 179px; height: 18px; margin: 0 -3px; border: 1px solid #bbb; padding: 0 4px; background: #efefef; font: inherit; }
.infocenter input::placeholder { color: #777; }
.infocenter .login { display: flex; gap: 4px; align-items: center; }

/* tabs */
.tabs { display: flex; align-items: flex-end; height: 19px; flex: none; padding-left: 44px; background: #404040; color: #e4e4e4; border-bottom: 1px solid #8a8a8a; font-family: "Noto Sans CJK SC", sans-serif; }
.tab { height: 17px; padding: 0 10px 4px; line-height: 13px; }
.tab-on { background: linear-gradient(#bdbdbd, #f0f0f0); color: #4a4a4a; padding: 0 9px 4px; margin-right: 1px; border-radius: 2px 2px 0 0; }
.tab-min { margin: 0 0 5px 17px; }

/* ribbon */
.ribbon { display: flex; flex: none; height: 95px; padding-left: 1px; background: linear-gradient(#d6d6d6, #8e8e8e); border-bottom: 2px solid #c8c8c8; font-family: "Noto Sans CJK SC", sans-serif; }
.panel { display: flex; flex-direction: column; background: #fefefe; border-right: 2px solid #b5b5b5; }
.tools { flex: 1; display: flex; padding-top: 3px; }
.panel h2 { height: 18px; line-height: 16px; text-align: center; background: #ececec; border-top: 1px solid #d5d5d5; }
.panel h2 .tri { border-width: 4px; border-bottom-width: 0; margin: 0 0 2px 7px; }
.big { display: flex; flex-direction: column; align-items: center; padding-top: 1px; line-height: 16px; }
.big svg { margin-bottom: 4px; }
.big .tri { margin-top: 4px; }
.two-line { display: flex; align-items: center; gap: 3px; margin-left: 9px; }
.col { display: flex; flex-direction: column; flex: none; }
.sm { display: flex; align-items: center; gap: 5px; height: 24px; }
.sm svg { width: 16px; height: 16px; }
.sm .tri { margin-left: 4px; }
.p-sketch { width: 75px; }
.p-sketch .big { width: 73px; }
.p-create { width: 282px; }
.p-create .big { width: 39px; }
.p-modify { width: 293px; }
.p-modify .big { width: 39px; }
.c-1 { width: 79px; margin-left: 4px; }
.c-2 { width: 67px; }
.c-4 { width: 54px; margin-left: 5px; }
.c-5 { width: 87px; }
.p-locate { width: 106px; }
.p-locate .big { width: 50px; }
.c-7 { margin-left: 1px; }
.p-array { width: 60px; }
.p-array .col { margin-left: 6px; }
.p-free { width: 118px; }
.p-free .big { width: 60px; }
.p-free .col { margin-left: 4px; }
.p-surface { width: 216px; }
.c-8 { width: 54px; margin-left: 6px; }
.c-9 { width: 79px; }
.p-param { width: 50px; }
.p-param .tools { padding: 2px 4px 1px; }
.p-param h2 .tri { margin-left: 5px; }
.big-on { width: 38px; background: linear-gradient(#c2dcf5, #a5cbee); border: 1px solid #2277cc; }
.fx { height: 36px; font: 34px/30px "Liberation Serif", serif; }
.fx sub { font-size: 20px; font-style: italic; font-weight: 700; vertical-align: -4px; }
.p-convert { width: 71px; }
.p-convert .big { width: 69px; }
.p-more { width: 39px; border-right-color: #e8e8e8; }
.more { display: flex; align-items: center; justify-content: space-between; width: 36px; height: 22px; padding: 0 4px; background: #b9d8f4; border: 1px solid #2277cc; }

/* workspace */
.work { flex: 1; min-height: 0; display: flex; position: relative; }
.browser { width: 197px; flex: none; display: flex; flex-direction: column; background: #f0f0f0; border-left: 1px solid #333; border-right: 2px solid #8a8f98; font-size: 10px; line-height: 13px; font-family: "Noto Sans CJK SC", sans-serif; }
.grip { display: flex; justify-content: flex-end; padding: 1px 2px 0; height: 7px; }
.grip::before { content: ""; flex: 1; height: 4px; margin-right: 4px; border: 1px solid #c6c6c6; border-left: 0; }
.bhead { display: flex; align-items: center; justify-content: space-between; height: 26px; padding: 0 6px 0 4px; background: #aaa; color: #fff; font-size: 12px; }
.bname { display: flex; align-items: center; gap: 2px; }
.bname .tri { border-top-color: #fff; border-width: 2px; border-bottom-width: 0; }
.btools { display: flex; align-items: center; gap: 4px; height: 14px; padding-left: 1px; }
.btools i { width: 1px; height: 9px; background: #aaa; }
.tree { flex: 1; margin: 0 1px 0 0; padding: 0; list-style: none; background: #fff; border-top: 1px solid #999; border-right: 1px solid #bbb; color: #444; }
.tree li { display: flex; align-items: center; height: 13px; padding-left: 2px; }
.tree b { font: 9px/10px "Liberation Mono", monospace; padding-top: 2px; }
.tree svg { margin-right: 1px; }
.main-view { margin-left: 10px; }
.node { width: 5px; height: 5px; margin-right: 5px; border: 1px solid #999; background: linear-gradient(#999, #999) center / 3px 1px no-repeat; }
.plus { background: #888; }
.tree .deep { padding-left: 14px; }
.elbow { width: 5px; height: 6px; margin: 0 4px 6px 0; border-left: 1px solid #999; border-bottom: 1px solid #999; }
.tree .last { padding-left: 12px; }

.view { flex: 1; position: relative; background: linear-gradient(#7787a6, #8391ae 20%, #a0a8bd 48%, #9aa4b8 64%, #9b9fac 76%, #a9acb3 87%, #bfc0c3); }
.view::before {
  content: "";
  position: absolute;
  inset: 0;
  background: linear-gradient(to right, rgba(26, 30, 40, .68), rgba(34, 41, 55, .46) 8%, rgba(50, 60, 80, .24) 17%, rgba(65, 77, 102, .08) 28%, rgba(80, 95, 125, 0) 40%, rgba(80, 95, 125, 0) 60%, rgba(65, 77, 102, .08) 72%, rgba(50, 60, 80, .22) 83%, rgba(40, 48, 64, .4) 92%, rgba(34, 42, 56, .58));
  mask-image: linear-gradient(#000 48%, rgba(0, 0, 0, .75) 62%, rgba(0, 0, 0, .3) 78%, rgba(0, 0, 0, .08) 90%, transparent);
}
.model { position: absolute; left: 0; top: 0; width: 100%; height: 100%; }

/* parameters dialog */
.dialog { position: absolute; left: 201px; top: 0; width: 793px; border: 2px solid #45494f; border-left-width: 1px; border-top-width: 1px; background: #f0f0f0; box-shadow: 1px 4px 14px rgba(0, 0, 0, .4); font: 11px/16px "Noto Sans CJK SC", sans-serif; color: #444; }
.dtitle { display: flex; justify-content: space-between; align-items: center; height: 27px; padding: 0 9px 2px 7px; background: #fff; color: #111; }
.sheet { position: relative; height: 274px; padding-right: 1px; }
.paper { position: absolute; left: 0; top: 0; width: 100%; height: 100%; }
.ink { fill: #b4b3b6; stroke: none; font-family: "Liberation Serif", serif; font-style: italic; }
.ink path { stroke: #b4b3b6; }
.sheet table { position: relative; width: 100%; table-layout: fixed; border-collapse: collapse; }
.w-mark { width: 7px; }
.w-pad { width: 9px; }
.w-name { width: 90px; }
.w-unit { width: 73px; }
.w-expr { width: 133px; }
.w-nom { width: 83px; }
.w-tol { width: 68px; }
.w-model { width: 83px; }
.w-key { width: 63px; }
.sheet th { height: 18px; padding: 0 0 2px 2px; text-align: left; font-weight: 400; line-height: 14px; background: #f0f0f0; border: 1px solid #aaa; white-space: nowrap; }
.exp svg { display: inline-block; vertical-align: -2px; }
.sheet td { height: 18px; padding: 0 0 0 1px; border: 1px solid #8c8c8c; background: #fff; font: 9px/14px "Liberation Mono", monospace; white-space: nowrap; overflow: hidden; }
.sheet tbody tr:nth-child(even) td { height: 19px; }
.sheet td.ex { vertical-align: top; }
.sheet td.ro, .sheet .group td { background: #d0d0d0; }
.sheet td.gname { padding-bottom: 2px; font: 11px/14px "Noto Sans CJK SC", sans-serif; }
.sheet tr td.mark { padding: 0; background: #f0f0f0; border-color: #bbb; }
.sheet tr td.pad { padding: 0; background: none; border: 0; }
.sheet tr td.line { background: linear-gradient(#999, #999) 5px 0 / 1px 100% no-repeat; }
.sheet tr td.minus { background: linear-gradient(#999, #999) 100% 50% / 6px 1px no-repeat; }
.sheet tr td.branch { background: linear-gradient(#999, #999) 5px 0 / 1px 100% no-repeat, linear-gradient(#999, #999) 100% 50% / 4px 1px no-repeat; }
.sheet tr td.end { background: linear-gradient(#999, #999) 5px 0 / 1px 50% no-repeat, linear-gradient(#999, #999) 100% 50% / 4px 1px no-repeat; }
.cur { display: block; width: 0; height: 0; margin-left: 2px; border: 3px solid transparent; border-left-color: #000; border-right: 0; }
.dot { display: block; width: 8px; height: 8px; margin-left: 0; border-radius: 50%; background: #ff0; border: 1px solid #77771a; }
.sheet td input { display: block; appearance: none; width: 8px; height: 8px; margin: 0; background: #fff; border: 1px solid #ccc; border-top: 2px solid #777; border-left: 2px solid #777; }
.sheet .sel td:not(.pad, .mark, .nm) { background: #0078d7; color: #cde6fa; border-color: #3c7fb8; }
.sel .dot { background: #00f; border-color: #88c; }
.sheet .sel input { background: #000; border: 1px solid #222; outline: 1px solid #888; outline-offset: -2px; }

.foot { display: flex; height: 58px; padding: 4px 11px 0 8px; }
.fleft { display: grid; grid-template-columns: 30px 88px 75px 119px; grid-template-rows: 21px 20px; gap: 5px 4px; align-content: start; }
.fleft > [aria-label] { width: 23px; }
.btn { display: flex; align-items: center; justify-content: center; background: #e1e1e1; border: 1px solid #cacaca; color: #444; }
.btn:disabled { background: #ccc; border-color: #c2c2c2; color: #999; }
.split { height: 15px; line-height: 13px; }
.split span { flex: 1; text-align: center; }
.bar { width: 1px; height: 11px; background: #888; margin-right: 2px; }
.split .tri { border-width: 5px; border-bottom-width: 0; border-top-color: #000; margin-right: 2px; }
.now { display: flex; align-items: center; gap: 3px; white-space: nowrap; }
.now input { appearance: none; width: 13px; height: 13px; margin: 0; background: #fff; border: 1px solid #333; }
.now input:checked::before { content: ""; display: block; width: 8px; height: 4px; margin: 2px 0 0 2px; border: solid #333; border-width: 0 0 1px 1px; transform: rotate(-45deg); }
.reset { margin: 1px 46px 0 auto; height: 50px; padding: 0 4px; border: 1px solid #dedede; }
.reset legend { padding: 0 3px 0 0; height: 17px; line-height: 17px; }
.reset div { display: flex; }
.reset .btn { width: 30px; height: 27px; }
.fright { display: flex; flex-direction: column; gap: 5px; width: 75px; }
.fright .btn { height: 21px; white-space: pre; }
.fright .primary { height: 20px; border: 1px solid #2a86d8; }
.resize { position: absolute; right: 1px; bottom: 1px; }
.menu { position: absolute; left: 73px; top: 131px; width: 149px; padding: 1px 0 4px; display: flex; flex-direction: column; background: #f0f0f0; border: 1px solid #ccc; box-shadow: 2px 2px 2px rgba(0, 0, 0, .35); color: #111; font-size: 12px; line-height: 18px; }
.menu button { text-align: left; padding-left: 25px; }
```
